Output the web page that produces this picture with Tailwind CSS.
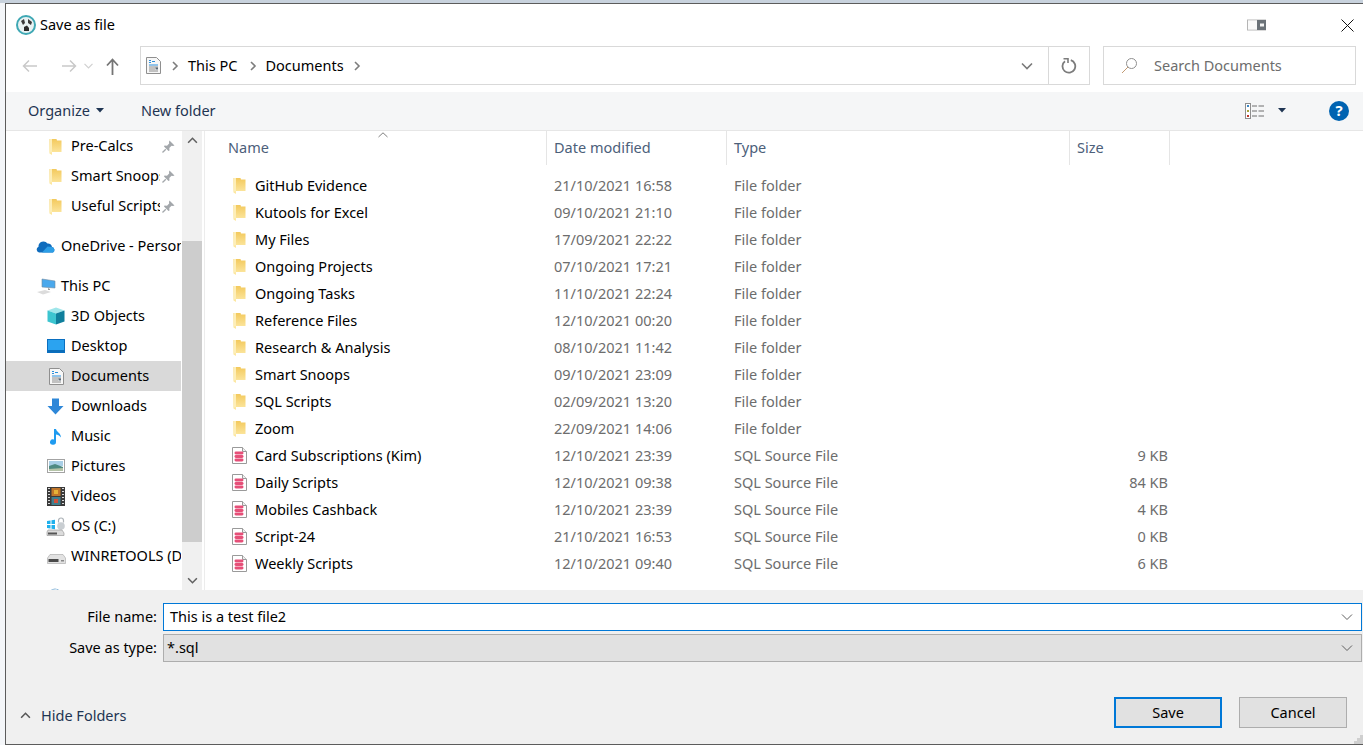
<!DOCTYPE html>
<html lang="en">
<head>
<meta charset="utf-8">
<title>Save as file</title>
<script src="https://cdn.jsdelivr.net/npm/@tailwindcss/browser@4"></script>
</head>
<body class="bg-[#f4f6f9] overflow-hidden font-['Noto_Sans','Open_Sans',sans-serif] text-[14.5px] text-black">

<svg class="absolute w-0 h-0" aria-hidden="true">
  <defs>
    <linearGradient id="fold" x1="0" y1="0" x2="0" y2="1">
      <stop offset="0" stop-color="#f3c95c"/>
      <stop offset="1" stop-color="#fdeaa8"/>
    </linearGradient>
    <symbol id="folder" viewBox="0 0 13 17">
      <path d="M0.5 1H7.5L8 2.5H12.5V14H3V17L0.5 15.5Z" fill="url(#fold)"/>
      <path d="M0.5 1H3V14.5H0.5Z" fill="#fdeeb8"/>
    </symbol>
    <symbol id="sqlfile" viewBox="0 0 15 17">
      <path d="M0.5 0.5H10.5L14.5 4.5V16.5H0.5Z" fill="#fff" stroke="#9a9a9a"/>
      <path d="M10.5 0.5V4.5H14.5" fill="#eee" stroke="#9a9a9a"/>
      <rect x="2.5" y="4.5" width="9" height="3" rx="1.4" fill="#e64f78"/>
      <rect x="2.5" y="8" width="9" height="3" rx="1.4" fill="#e64f78"/>
      <rect x="2.5" y="11.5" width="9" height="3" rx="1.4" fill="#e64f78"/>
    </symbol>
    <symbol id="pin" viewBox="0 0 13 13">
      <path d="M7.5 0.5L12.5 5.5L11 6L9.5 5.8L7.3 8L7.5 10.5L6.5 11L2 6.5L2.5 5.5L5 5.7L7.2 3.5L7 2Z" fill="#a3a7ab"/>
      <path d="M3.8 9.2L0.5 12.5" stroke="#a3a7ab" stroke-width="1.3"/>
    </symbol>
    <symbol id="doc" viewBox="0 0 15 17">
      <path d="M0.5 0.5H10.5L14.5 4.5V16.5H0.5Z" fill="#f7f7f7" stroke="#8f8f8f"/>
      <path d="M3 3.5H5M3 5.5H5" stroke="#2b8fdc" stroke-width="1.2"/>
      <path d="M6 4.5H9M3 8H12" stroke="#2b8fdc"/>
      <path d="M3 10H12M3 12H9M3 14H12" stroke="#8c8c8c"/>
      <path d="M9.5 10.5H12V12.5H9.5Z" fill="#5a6a78"/>
    </symbol>
    <symbol id="chev" viewBox="0 0 8 12">
      <path d="M2 2L6 6L2 10" fill="none" stroke="#7d7d7d" stroke-width="1.6"/>
    </symbol>
    <symbol id="caret" viewBox="0 0 8 5">
      <path d="M0 0H8L4 4.5Z" fill="#1f3553"/>
    </symbol>
    <symbol id="down" viewBox="0 0 12 8">
      <path d="M1 1.5L6 6.5L11 1.5" fill="none" stroke="#5f5f5f" stroke-width="1"/>
    </symbol>
  </defs>
</svg>

<div class="h-[745px] flex flex-col">
  <div class="h-[3px] bg-[#c8d2dd] shrink-0"></div>
  <div class="flex-1 min-h-0 ml-[5px] border-t border-l border-b border-[#5c5c5c] bg-white flex flex-col">

    <!-- title bar -->
    <div class="h-[42px] shrink-0 flex items-center pl-[10px] pr-[9px]">
      <svg class="w-[20px] h-[20px] mr-[4px]" viewBox="0 0 20 20">
        <circle cx="10" cy="10" r="9" fill="#e9f2f3" stroke="#3fa8b4" stroke-width="2"/>
        <path d="M5 6L8 4L9 8L7 10Z" fill="#3a3a3a"/>
        <path d="M12 4L16 7L15 10L12 8Z" fill="#3a3a3a"/>
        <path d="M8 16V12L11 10.5L13 13V16Z" fill="#2b2b2b"/>
      </svg>
      <span>Save as file</span>
      <svg class="ml-auto w-[19px] h-[12px] mr-[75px]" viewBox="0 0 19 12">
        <rect x="0.5" y="1" width="18" height="10" fill="#e6e6e6" stroke="#b5b5b5"/>
        <rect x="1" y="1.5" width="9" height="9" fill="#fafafa"/>
        <rect x="10" y="1" width="9" height="10" fill="#6b7278"/>
        <rect x="13" y="4.5" width="4" height="3" fill="#f2f2f2"/>
      </svg>
      <svg class="w-[13px] h-[13px]" viewBox="0 0 13 13">
        <path d="M0.5 0.5L12.5 12.5M12.5 0.5L0.5 12.5" stroke="#111" stroke-width="1"/>
      </svg>
    </div>

    <!-- address row -->
    <div class="h-[46px] shrink-0 flex items-start">
      <div class="w-[134px] h-[39px] shrink-0 flex items-center">
        <svg class="w-[16px] h-[14px] ml-[16px]" viewBox="0 0 16 14"><path d="M15 7H1.5M7 1.5L1.5 7L7 12.5" fill="none" stroke="#c9c9c9" stroke-width="1.5"/></svg>
        <svg class="w-[16px] h-[14px] ml-[23px]" viewBox="0 0 16 14"><path d="M1 7H14.5M9 1.5L14.5 7L9 12.5" fill="none" stroke="#c9c9c9" stroke-width="1.5"/></svg>
        <svg class="w-[9px] h-[6px] ml-[7px]" viewBox="0 0 9 6"><path d="M0.5 0.8L4.5 4.8L8.5 0.8" fill="none" stroke="#d0d0d0" stroke-width="1.2"/></svg>
        <svg class="w-[13px] h-[17px] ml-[13px] mt-[2px]" viewBox="0 0 13 17"><path d="M6.5 17V2M1 7.5L6.5 1.5L12 7.5" fill="none" stroke="#757575" stroke-width="1.8"/></svg>
      </div>
      <div class="w-[950px] h-[39px] shrink-0 border border-[#d9d9d9] flex items-center">
        <svg class="w-[15px] h-[17px] ml-[5px] mr-[10px]"><use href="#doc"/></svg>
        <svg class="w-[8px] h-[12px] mr-[9px]"><use href="#chev"/></svg>
        <span class="mr-[12px]">This PC</span>
        <svg class="w-[8px] h-[12px] mr-[8px]"><use href="#chev"/></svg>
        <span class="mr-[9px]">Documents</span>
        <svg class="w-[8px] h-[12px]"><use href="#chev"/></svg>
        <svg class="ml-auto w-[12px] h-[8px] mr-[15px]" viewBox="0 0 12 8"><path d="M1 1.5L6 6.5L11 1.5" fill="none" stroke="#7a7a7a" stroke-width="1.6"/></svg>
        <div class="w-[41px] h-full border-l border-[#d9d9d9] flex items-center justify-center">
          <svg class="w-[16px] h-[16px]" viewBox="0 0 16 16"><path d="M9.8 2.2A6.4 6.4 0 1 1 4 3.2" fill="none" stroke="#7c7c7c" stroke-width="1.8"/><path d="M2.5 0.8H7V5" fill="none" stroke="#7c7c7c" stroke-width="1.6"/></svg>
        </div>
      </div>
      <div class="w-[253px] h-[39px] shrink-0 ml-[13px] border border-[#d9d9d9] flex items-center text-[#6d6d6d]">
        <svg class="w-[17px] h-[17px] ml-[17px] mr-[16px]" viewBox="0 0 17 17"><circle cx="10.5" cy="6.5" r="5" fill="none" stroke="#8f8f8f"/><path d="M7 10L1 16" stroke="#c29a73" stroke-width="1"/></svg>
        <span>Search Documents</span>
      </div>
    </div>

    <!-- toolbar -->
    <div class="h-[39px] shrink-0 bg-[#f5f6f7] border-b border-[#e6e6e6] flex items-center text-[#1f3553] pb-[1px]">
      <span class="ml-[22px]">Organize</span>
      <svg class="w-[8px] h-[5px] ml-[6px]"><use href="#caret"/></svg>
      <span class="ml-[37px]">New folder</span>
      <svg class="ml-auto w-[19px] h-[16px]" viewBox="0 0 19 16">
        <rect x="0.5" y="0.5" width="5" height="15" fill="#fff" stroke="#8f8f8f"/>
        <rect x="2" y="2" width="2" height="2" fill="#3b87c4"/>
        <rect x="2" y="7" width="2" height="2" fill="#a8a23c"/>
        <rect x="2" y="12" width="2" height="2" fill="#c0392b"/>
        <path d="M7 3H12M13.500 3H19M7 8H12M13.500 8H19M7 13H12M13.500 13H19" stroke="#6f6f6f"/>
      </svg>
      <svg class="w-[8px] h-[5px] ml-[14px]"><use href="#caret"/></svg>
      <div class="w-[20px] h-[20px] rounded-full bg-[#0063b1] text-white font-bold text-[15px] leading-none flex items-center justify-center ml-[43px] mr-[14px]">?</div>
    </div>

    <!-- panes -->
    <div class="flex-1 min-h-0 flex">
      <!-- nav pane -->
      <div class="w-[175px] shrink-0 overflow-hidden whitespace-nowrap">
        <div class="h-[30px] flex items-center pl-[43px]">
          <svg class="w-[13px] h-[17px] mr-[9px] shrink-0"><use href="#folder"/></svg>
          <span class="w-[89px] overflow-hidden">Pre-Calcs</span>
          <svg class="w-[13px] h-[13px] shrink-0 ml-[2px]"><use href="#pin"/></svg>
        </div>
        <div class="h-[30px] flex items-center pl-[43px]">
          <svg class="w-[13px] h-[17px] mr-[9px] shrink-0"><use href="#folder"/></svg>
          <span class="w-[89px] overflow-hidden">Smart Snoops</span>
          <svg class="w-[13px] h-[13px] shrink-0 ml-[2px]"><use href="#pin"/></svg>
        </div>
        <div class="h-[30px] flex items-center pl-[43px]">
          <svg class="w-[13px] h-[17px] mr-[9px] shrink-0"><use href="#folder"/></svg>
          <span class="w-[89px] overflow-hidden">Useful Scripts</span>
          <svg class="w-[13px] h-[13px] shrink-0 ml-[2px]"><use href="#pin"/></svg>
        </div>
        <div class="h-[30px] mt-[10px] flex items-center pl-[30px]">
          <svg class="w-[20px] h-[13px] mr-[5px] shrink-0" viewBox="0 0 20 13">
            <path d="M3 12.500A3 3 0 0 1 2.500 6.800A5 5 0 0 1 11.500 3.500A4 4 0 0 1 16 7A3 3 0 0 1 17 12.500Z" fill="#0f6cbd"/>
            <path d="M6 12.500L11.500 6.500L16 7A3 3 0 0 1 17 12.500Z" fill="#2d9ee6"/>
          </svg>
          <span>OneDrive - Personal</span>
        </div>
        <div class="h-[30px] mt-[10px] flex items-center pl-[31px]">
          <svg class="w-[19px] h-[17px] mr-[5px] shrink-0" viewBox="0 0 19 17">
            <path d="M5 1L18 3V10L5 9Z" fill="#4aa8ec" stroke="#6e8ba3" stroke-width="0.6"/>
            <path d="M11 10V12H13V11Z" fill="#9a9a9a"/>
            <path d="M0 14L8 12L14 14L6 16.500Z" fill="#dcdcdc"/>
          </svg>
          <span>This PC</span>
        </div>
        <div class="h-[30px] flex items-center pl-[41px]">
          <svg class="w-[18px] h-[18px] mr-[6px] shrink-0" viewBox="0 0 18 18">
            <path d="M9 0.500L17.500 3.500L9 6.500L0.500 3.500Z" fill="#9fe6ea"/>
            <path d="M0.500 3.500L9 6.500V17.500L0.500 14.500Z" fill="#3cc5d0"/>
            <path d="M17.500 3.500L9 6.500V17.500L17.500 14.500Z" fill="#0f7f9c"/>
          </svg>
          <span>3D Objects</span>
        </div>
        <div class="h-[30px] flex items-center pl-[41px]">
          <svg class="w-[18px] h-[14px] mr-[6px] shrink-0" viewBox="0 0 18 14">
            <rect x="0.500" y="0.500" width="17" height="13" fill="#2ba3f0" stroke="#0a6fc0"/>
            <rect x="1" y="11" width="16" height="2" fill="#0c6db8"/>
          </svg>
          <span>Desktop</span>
        </div>
        <div class="h-[30px] flex items-center pl-[43px] bg-[#d9d9d9]">
          <svg class="w-[15px] h-[17px] mr-[7px] shrink-0"><use href="#doc"/></svg>
          <span>Documents</span>
        </div>
        <div class="h-[30px] flex items-center pl-[41px]">
          <svg class="w-[17px] h-[17px] mr-[7px] shrink-0" viewBox="0 0 17 17">
            <path d="M5 0.500H12V8H16.500L8.500 16.500L0.500 8H5Z" fill="#2e87d8"/>
          </svg>
          <span>Downloads</span>
        </div>
        <div class="h-[30px] flex items-center pl-[44px]">
          <svg class="w-[12px] h-[17px] mr-[9px] shrink-0" viewBox="0 0 12 17">
            <path d="M4 1H6C6.500 4 11 5 11 9.500C9.500 7.500 7.500 6.800 6 6.500V14A3 2.700 0 1 1 4 11.500Z" fill="#1f9bf0"/>
          </svg>
          <span>Music</span>
        </div>
        <div class="h-[30px] flex items-center pl-[41px]">
          <svg class="w-[18px] h-[14px] mr-[6px] shrink-0" viewBox="0 0 18 14">
            <rect x="0.500" y="0.500" width="17" height="13" fill="#fff" stroke="#a3a3a3"/>
            <rect x="2" y="2" width="14" height="5" fill="#a9cfe6"/>
            <path d="M2 7L8 5L16 8V12H2Z" fill="#4f8a82"/>
            <path d="M2 10L16 9V12H2Z" fill="#b5c4a8"/>
          </svg>
          <span>Pictures</span>
        </div>
        <div class="h-[30px] flex items-center pl-[41px]">
          <svg class="w-[18px] h-[19px] mr-[6px] shrink-0" viewBox="0 0 18 19">
            <rect width="18" height="19" fill="#3a3a3a"/>
            <path d="M1 1.500H3M1 4.500H3M1 7.500H3M1 10.500H3M1 13.500H3M1 16.500H3M15 1.500H17M15 4.500H17M15 7.500H17M15 10.500H17M15 13.500H17M15 16.500H17" stroke="#d8d8d8"/>
            <rect x="4.500" y="1" width="9" height="8" fill="#c0762a"/>
            <rect x="4.500" y="10" width="9" height="8" fill="#3f7f8f"/>
            <rect x="7" y="3" width="4" height="4" fill="#e4b43a"/>
            <rect x="7" y="12" width="4" height="4" fill="#d0503a"/>
          </svg>
          <span>Videos</span>
        </div>
        <div class="h-[30px] flex items-center pl-[40px]">
          <svg class="w-[20px] h-[19px] mr-[5px] shrink-0" viewBox="0 0 20 19">
            <path d="M1 4L4.500 3.500V7H1ZM5.500 3.300L9 2.800V7H5.500ZM1 8H4.500V11.500L1 11ZM5.500 8H9V12.200L5.500 11.700Z" fill="#1fb0ec"/>
            <circle cx="15" cy="9" r="3.800" fill="#c9ced2"/>
            <path d="M12.500 5.500V3.500A2.500 2.500 0 0 1 17.500 3.500V5.500" fill="none" stroke="#aeb4b9" stroke-width="1.200"/>
            <path d="M2 13H16L18 16V18.500H1V15Z" fill="#dcdcdc" stroke="#8e8e8e" stroke-width="0.600"/>
            <rect x="2" y="15.500" width="9" height="2" fill="#555"/>
          </svg>
          <span>OS (C:)</span>
        </div>
        <div class="h-[30px] flex items-center pl-[41px]">
          <svg class="w-[19px] h-[10px] mr-[5px] mt-[6px] shrink-0" viewBox="0 0 19 10">
            <path d="M3 0.500H16L18.500 4V9.500H0.500V4Z" fill="#e2e2e2" stroke="#a5a5a5" stroke-width="0.600"/>
            <rect x="1.500" y="5" width="10" height="3" fill="#4a4a4a"/>
            <rect x="14" y="6" width="3" height="1.500" fill="#888"/>
          </svg>
          <span>WINRETOOLS (D:)</span>
        </div>
        <div class="h-[30px] mt-[10px] flex items-start pl-[42px] pt-[7px]">
          <svg class="w-[14px] h-[14px]" viewBox="0 0 14 14"><circle cx="7" cy="7" r="6.500" fill="#7fb0d6"/><path d="M3 2L9 1L7 5L3 6Z" fill="#e9f2f8"/></svg>
        </div>
      </div>

      <!-- nav scrollbar -->
      <div class="w-[20px] shrink-0 ml-px bg-[#f0f0f0] flex flex-col">
        <div class="h-[19px] flex items-center justify-center">
          <svg class="w-[11px] h-[7px] rotate-180" viewBox="0 0 12 8"><path d="M1 1.500L6 6.500L11 1.500" fill="none" stroke="#606060" stroke-width="1.800"/></svg>
        </div>
        <div class="mt-[91px] h-[301px] bg-[#cdcdcd]"></div>
        <div class="mt-[29px] h-[19px] flex items-center justify-center">
          <svg class="w-[11px] h-[7px]" viewBox="0 0 12 8"><path d="M1 1.500L6 6.500L11 1.500" fill="none" stroke="#606060" stroke-width="1.800"/></svg>
        </div>
      </div>

      <!-- file list -->
      <div class="flex-1 min-w-0 ml-[2px] border-l border-[#ececec] whitespace-nowrap">
        <div class="h-[34px] flex items-center text-[#4c607a]">
          <div class="relative w-[342px] h-full flex items-center pl-[23px] border-r border-[#e5e5e5]">
            Name
            <svg class="absolute left-[173px] top-[1px] w-[10px] h-[6px]" viewBox="0 0 10 6"><path d="M0.500 5L5 0.800L9.500 5" fill="none" stroke="#7f7f7f"/></svg>
          </div>
          <div class="w-[180px] h-full flex items-center pl-[7px] border-r border-[#e5e5e5]">Date modified</div>
          <div class="w-[343px] h-full flex items-center pl-[7px] border-r border-[#e5e5e5]">Type</div>
          <div class="w-[100px] h-full flex items-center pl-[7px] border-r border-[#e5e5e5]">Size</div>
        </div>
        <div class="pt-[7px] text-[#6d6d6d]">
          <div class="h-[27px] flex items-center"><svg class="w-[13px] h-[17px] ml-[28px] mr-[9px]"><use href="#folder"/></svg><span class="w-[299px] text-black">GitHub Evidence</span><span class="w-[180px]">21/10/2021 16:58</span><span class="w-[343px]">File folder</span></div>
          <div class="h-[27px] flex items-center"><svg class="w-[13px] h-[17px] ml-[28px] mr-[9px]"><use href="#folder"/></svg><span class="w-[299px] text-black">Kutools for Excel</span><span class="w-[180px]">09/10/2021 21:10</span><span class="w-[343px]">File folder</span></div>
          <div class="h-[27px] flex items-center"><svg class="w-[13px] h-[17px] ml-[28px] mr-[9px]"><use href="#folder"/></svg><span class="w-[299px] text-black">My Files</span><span class="w-[180px]">17/09/2021 22:22</span><span class="w-[343px]">File folder</span></div>
          <div class="h-[27px] flex items-center"><svg class="w-[13px] h-[17px] ml-[28px] mr-[9px]"><use href="#folder"/></svg><span class="w-[299px] text-black">Ongoing Projects</span><span class="w-[180px]">07/10/2021 17:21</span><span class="w-[343px]">File folder</span></div>
          <div class="h-[27px] flex items-center"><svg class="w-[13px] h-[17px] ml-[28px] mr-[9px]"><use href="#folder"/></svg><span class="w-[299px] text-black">Ongoing Tasks</span><span class="w-[180px]">11/10/2021 22:24</span><span class="w-[343px]">File folder</span></div>
          <div class="h-[27px] flex items-center"><svg class="w-[13px] h-[17px] ml-[28px] mr-[9px]"><use href="#folder"/></svg><span class="w-[299px] text-black">Reference Files</span><span class="w-[180px]">12/10/2021 00:20</span><span class="w-[343px]">File folder</span></div>
          <div class="h-[27px] flex items-center"><svg class="w-[13px] h-[17px] ml-[28px] mr-[9px]"><use href="#folder"/></svg><span class="w-[299px] text-black">Research &amp; Analysis</span><span class="w-[180px]">08/10/2021 11:42</span><span class="w-[343px]">File folder</span></div>
          <div class="h-[27px] flex items-center"><svg class="w-[13px] h-[17px] ml-[28px] mr-[9px]"><use href="#folder"/></svg><span class="w-[299px] text-black">Smart Snoops</span><span class="w-[180px]">09/10/2021 23:09</span><span class="w-[343px]">File folder</span></div>
          <div class="h-[27px] flex items-center"><svg class="w-[13px] h-[17px] ml-[28px] mr-[9px]"><use href="#folder"/></svg><span class="w-[299px] text-black">SQL Scripts</span><span class="w-[180px]">02/09/2021 13:20</span><span class="w-[343px]">File folder</span></div>
          <div class="h-[27px] flex items-center"><svg class="w-[13px] h-[17px] ml-[28px] mr-[9px]"><use href="#folder"/></svg><span class="w-[299px] text-black">Zoom</span><span class="w-[180px]">22/09/2021 14:06</span><span class="w-[343px]">File folder</span></div>
          <div class="h-[27px] flex items-center"><svg class="w-[15px] h-[17px] ml-[27px] mr-[8px]"><use href="#sqlfile"/></svg><span class="w-[299px] text-black">Card Subscriptions (Kim)</span><span class="w-[180px]">12/10/2021 23:39</span><span class="w-[343px]">SQL Source File</span><span class="w-[91px] text-right">9 KB</span></div>
          <div class="h-[27px] flex items-center"><svg class="w-[15px] h-[17px] ml-[27px] mr-[8px]"><use href="#sqlfile"/></svg><span class="w-[299px] text-black">Daily Scripts</span><span class="w-[180px]">12/10/2021 09:38</span><span class="w-[343px]">SQL Source File</span><span class="w-[91px] text-right">84 KB</span></div>
          <div class="h-[27px] flex items-center"><svg class="w-[15px] h-[17px] ml-[27px] mr-[8px]"><use href="#sqlfile"/></svg><span class="w-[299px] text-black">Mobiles Cashback</span><span class="w-[180px]">12/10/2021 23:39</span><span class="w-[343px]">SQL Source File</span><span class="w-[91px] text-right">4 KB</span></div>
          <div class="h-[27px] flex items-center"><svg class="w-[15px] h-[17px] ml-[27px] mr-[8px]"><use href="#sqlfile"/></svg><span class="w-[299px] text-black">Script-24</span><span class="w-[180px]">21/10/2021 16:53</span><span class="w-[343px]">SQL Source File</span><span class="w-[91px] text-right">0 KB</span></div>
          <div class="h-[27px] flex items-center"><svg class="w-[15px] h-[17px] ml-[27px] mr-[8px]"><use href="#sqlfile"/></svg><span class="w-[299px] text-black">Weekly Scripts</span><span class="w-[180px]">12/10/2021 09:40</span><span class="w-[343px]">SQL Source File</span><span class="w-[91px] text-right">6 KB</span></div>
        </div>
      </div>
    </div>

    <!-- bottom panel -->
    <div class="relative h-[154px] shrink-0 bg-[#f0f0f0] pt-[13px] pr-px flex flex-col">
      <div class="flex items-center h-[28px]">
        <span class="w-[151px] text-right mr-[6px]">File name:</span>
        <div class="flex-1 h-full bg-white border border-[#0078d7] flex items-center pl-[6px] pr-[8px]">
          This is a test file2
          <svg class="ml-auto w-[12px] h-[8px]"><use href="#down"/></svg>
        </div>
      </div>
      <div class="flex items-center h-[28px] mt-[3px]">
        <span class="w-[151px] text-right mr-[6px]">Save as type:</span>
        <div class="flex-1 h-full bg-[#e1e1e1] border border-[#adadad] flex items-center pl-[3px] pr-[8px]">
          *.sql
          <svg class="ml-auto w-[12px] h-[8px]"><use href="#down"/></svg>
        </div>
      </div>
      <div class="flex items-start mt-[35px]">
        <div class="flex items-center mt-[8px] ml-[14px] text-[#1f3553]">
          <svg class="w-[11px] h-[7px] rotate-180 mr-[10px]" viewBox="0 0 12 8"><path d="M1 1.500L6 6.500L11 1.500" fill="none" stroke="#555" stroke-width="1.800"/></svg>
          Hide Folders
        </div>
        <div class="ml-auto w-[108px] h-[31px] border-2 border-[#0078d7] bg-[#e1e1e1] flex items-center justify-center">Save</div>
        <div class="ml-[17px] mr-[15px] w-[108px] h-[31px] border border-[#adadad] bg-[#e1e1e1] flex items-center justify-center">Cancel</div>
      </div>
      <svg class="absolute right-0 bottom-0 w-[9px] h-[9px]" viewBox="0 0 9 9">
        <path d="M6 0H9V3H6ZM3 3H6V6H3ZM6 3H9V6H6ZM0 6H3V9H0ZM3 6H6V9H3ZM6 6H9V9H6Z" fill="#cfcfcf"/>
      </svg>
    </div>
  </div>
</div>
</body>
</html>
